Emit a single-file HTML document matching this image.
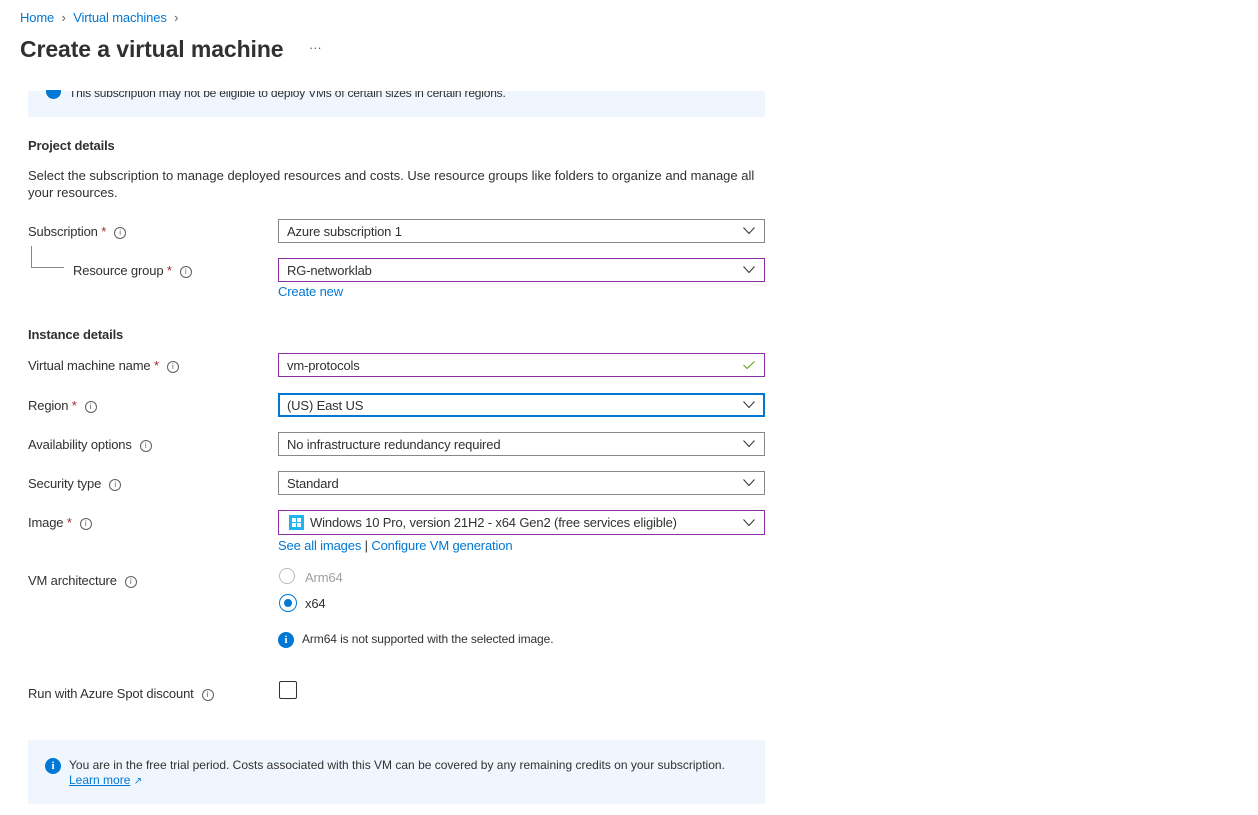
<!DOCTYPE html>
<html><head><meta charset="utf-8"><style>
body{margin:0;width:1258px;height:815px;background:#fff;font-family:"Liberation Sans",sans-serif;color:#323130;font-size:13px;position:relative;overflow:hidden;letter-spacing:-0.15px}
.a{position:absolute;white-space:nowrap}
.lnk{color:#0078d4}
.lbl{position:absolute;left:28px;white-space:nowrap}
.req{color:#a4262c}
.i{display:inline-block;width:10px;height:10px;border:1px solid #605e5c;border-radius:50%;font-size:8px;line-height:10px;text-align:center;color:#605e5c;vertical-align:middle;margin-left:8px;letter-spacing:0}
.box{position:absolute;left:278px;height:22px;border:1px solid #8a8886;line-height:23px;padding-left:8px;box-sizing:content-box;width:477px;white-space:nowrap}
.pur{border-color:#8a2da5}
.chev{position:absolute;right:9px;top:7px;width:12px;height:8px}
.info{position:absolute;background:#eff6fe}
.bi{display:inline-block;width:15px;height:15px;border-radius:50%;background:#0078d4;color:#fff;font-weight:bold;font-size:11px;line-height:15px;text-align:center;font-family:"Liberation Serif",serif;letter-spacing:0}
</style></head><body>
<div class="a" style="left:20px;top:10px;font-size:13px"><span class="lnk">Home</span> <span style="color:#605e5c;margin:0 4px">›</span> <span class="lnk">Virtual machines</span> <span style="color:#605e5c;margin-left:4px">›</span></div>
<div class="a" style="left:20px;top:36px;font-size:23px;font-weight:600;letter-spacing:-0.1px;color:#323130">Create a virtual machine</div>
<div class="a" style="left:309px;top:40px;font-size:13px;color:#605e5c">···</div>
<div class="info" style="left:28px;top:91px;width:737px;height:26px"></div>
<div style="position:absolute;left:46px;top:84px;width:15px;height:15px;border-radius:50%;background:#0078d4;clip-path:inset(6px 0 0 0)"></div>
<div class="a" style="left:69px;top:86px;font-size:12px;letter-spacing:-0.2px;clip-path:inset(5px 0 0 0)">This subscription may not be eligible to deploy VMs of certain sizes in certain regions.</div>
<div class="a" style="left:28px;top:138px;font-weight:bold">Project details</div>
<div class="a" style="left:28px;top:167px;line-height:17px;letter-spacing:0">Select the subscription to manage deployed resources and costs. Use resource groups like folders to organize and manage all<br>your resources.</div>
<div class="lbl" style="top:224px">Subscription <span class="req">*</span><span class="i">i</span></div>
<div class="box" style="top:219px">Azure subscription 1<svg class="chev" viewBox="0 0 12 8"><path d="M.5.5 6 6.5 11.5.5" fill="none" stroke="#323130"/></svg></div>
<div style="position:absolute;left:31px;top:246px;width:32px;height:21px;border-left:1px solid #8a8886;border-bottom:1px solid #8a8886"></div>
<div class="lbl" style="left:73px;top:263px">Resource group <span class="req">*</span><span class="i">i</span></div>
<div class="box pur" style="top:258px">RG-networklab<svg class="chev" viewBox="0 0 12 8"><path d="M.5.5 6 6.5 11.5.5" fill="none" stroke="#323130"/></svg></div>
<div class="a lnk" style="left:278px;top:284px">Create new</div>
<div class="a" style="left:28px;top:327px;font-weight:bold">Instance details</div>
<div class="lbl" style="top:358px">Virtual machine name <span class="req">*</span><span class="i">i</span></div>
<div class="box pur" style="top:353px">vm-protocols<svg class="chev" viewBox="0 0 12 8"><path d="M.5 4 4 7.5 11.5.5" fill="none" stroke="#57a300"/></svg></div>
<div class="lbl" style="top:398px">Region <span class="req">*</span><span class="i">i</span></div>
<div class="box" style="top:393px;border:2px solid #0078d4;height:20px;line-height:21px;padding-left:7px;width:476px">(US) East US<svg class="chev" viewBox="0 0 12 8" style="top:6px;right:8px"><path d="M.5.5 6 6.5 11.5.5" fill="none" stroke="#323130"/></svg></div>
<div class="lbl" style="top:437px">Availability options<span class="i">i</span></div>
<div class="box" style="top:432px">No infrastructure redundancy required<svg class="chev" viewBox="0 0 12 8"><path d="M.5.5 6 6.5 11.5.5" fill="none" stroke="#323130"/></svg></div>
<div class="lbl" style="top:476px">Security type<span class="i">i</span></div>
<div class="box" style="top:471px">Standard<svg class="chev" viewBox="0 0 12 8"><path d="M.5.5 6 6.5 11.5.5" fill="none" stroke="#323130"/></svg></div>
<div class="lbl" style="top:515px">Image <span class="req">*</span><span class="i">i</span></div>
<div class="box pur" style="top:510px;height:23px;padding-left:31px;width:454px">Windows 10 Pro, version 21H2 - x64 Gen2 (free services eligible)<svg style="position:absolute;left:10px;top:4px" width="15" height="15" viewBox="0 0 15 15"><rect width="15" height="15" fill="#1fb3f0"/><path d="M3 3h4v4H3zM8 3h4v4H8zM3 8h4v4H3zM8 8h4v4H8z" fill="#fff"/></svg><svg class="chev" viewBox="0 0 12 8" style="top:8px"><path d="M.5.5 6 6.5 11.5.5" fill="none" stroke="#323130"/></svg></div>
<div class="a" style="left:278px;top:538px"><span class="lnk">See all images</span> | <span class="lnk">Configure VM generation</span></div>
<div class="lbl" style="top:573px">VM architecture<span class="i">i</span></div>
<div style="position:absolute;left:279px;top:568px;width:16px;height:16px;border:1px solid #bbb;border-radius:50%;box-sizing:border-box"></div>
<div class="a" style="left:305px;top:570px;color:#a19f9d">Arm64</div>
<div style="position:absolute;left:279px;top:594px;width:18px;height:18px;border:1px solid #0078d4;border-radius:50%;box-sizing:border-box"><div style="position:absolute;left:4px;top:4px;width:8px;height:8px;border-radius:50%;background:#0078d4"></div></div>
<div class="a" style="left:305px;top:596px">x64</div>
<div class="a" style="left:278px;top:631px"><span class="bi" style="width:16px;height:16px;line-height:16px">i</span></div>
<div class="a" style="left:302px;top:632px;font-size:12px;letter-spacing:-0.1px">Arm64 is not supported with the selected image.</div>
<div class="lbl" style="top:686px">Run with Azure Spot discount<span class="i">i</span></div>
<div style="position:absolute;left:279px;top:681px;width:18px;height:18px;border:1px solid #323130;border-radius:2px;box-sizing:border-box"></div>
<div class="info" style="left:28px;top:740px;width:737px;height:64px"></div>
<div class="a" style="left:45px;top:757px"><span class="bi" style="width:16px;height:16px;line-height:16px">i</span></div>
<div class="a" style="left:69px;top:758px;font-size:12px;letter-spacing:0">You are in the free trial period. Costs associated with this VM can be covered by any remaining credits on your subscription.</div>
<div class="a" style="left:69px;top:773px;font-size:12px;letter-spacing:0"><span style="color:#0078d4;text-decoration:underline">Learn more</span> <span style="color:#0078d4;font-size:10px">↗</span></div>
</body></html>
